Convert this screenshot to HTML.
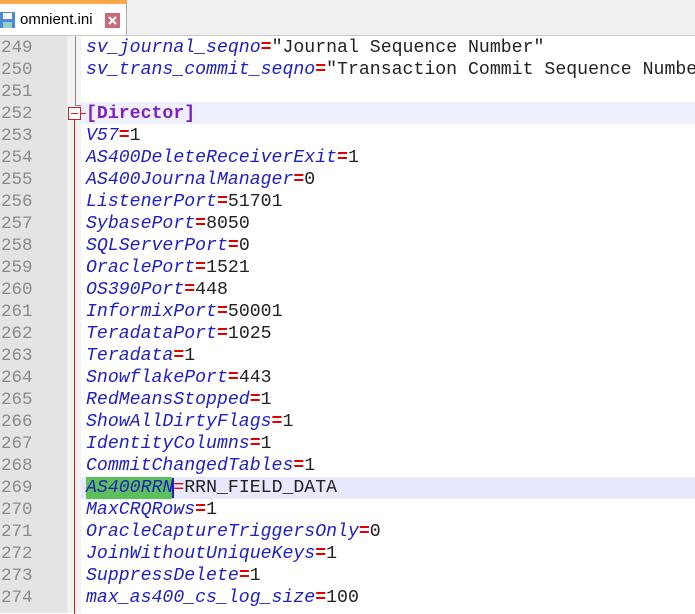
<!DOCTYPE html><html><head><style>
body{margin:0;width:695px;height:613px;overflow:hidden;background:#fff;font-family:"Liberation Mono",monospace;position:relative}
.tabbar{position:absolute;left:0;top:0;width:695px;height:35px;background:#f0f0f0;border-bottom:1px solid #c8c8c8}
.tab{position:absolute;left:0;top:0;width:127px;height:35px;background:#fff;border-top:4px solid #f8a848;box-sizing:border-box;border-right:1px solid #aaa}
.tab span{position:absolute;left:20px;top:7px;font:15px "Liberation Sans",sans-serif;color:#000}
.gut{position:absolute;left:0;top:36px;width:67px;height:577px;background:#e4e4e4}
.fold{position:absolute;left:67px;top:36px;width:14px;height:577px;background:#f2f2f2}
.ln{position:absolute;left:1px;font-size:17.5px;color:#8a8a8a;line-height:22px}
.l{position:absolute;left:86px;font-size:18.2px;line-height:22px;white-space:pre;color:#000}
.k{color:#2020c0;font-style:italic}
.e{color:#e00000;font-weight:bold}
.s{color:#222}
.hl{position:absolute;left:81px;width:614px;height:22px}
</style></head><body>
<div class="tabbar"><div class="tab"><svg style="position:absolute;left:0;top:7px" width="16" height="18"><rect x="0" y="1" width="15" height="16" fill="#4a8ad0"/><rect x="3" y="2" width="9" height="6" fill="#fff"/><rect x="3" y="11" width="9" height="6" fill="#9cc"/></svg><span>omnient.ini</span><svg style="position:absolute;left:105px;top:9px" width="15" height="15"><rect width="15" height="15" fill="#c86a7a"/><path d="M4 4L11 11M11 4L4 11" stroke="#fff" stroke-width="2.2"/></svg></div></div>
<div class="gut"></div><div class="fold"></div>
<div class="hl" style="top:102px;background:#eef0ff"></div>
<div class="hl" style="top:477px;background:#e8e8ff"></div>
<div style="position:absolute;left:86px;top:477px;width:86px;height:22px;background:#5cc05c"></div>
<div style="position:absolute;left:172px;top:478px;width:2px;height:20px;background:#2020c0"></div>
<div style="position:absolute;left:75px;top:36px;width:1px;height:70px;background:#888"></div>
<div style="position:absolute;left:75px;top:105px;width:6px;height:1px;background:#888"></div>
<div style="position:absolute;left:68px;top:107px;width:13px;height:13px;border:1px solid #d02020;box-sizing:border-box;background:#fff"></div>
<div style="position:absolute;left:71px;top:113px;width:7px;height:1px;background:#d02020"></div>
<div style="position:absolute;left:81px;top:113px;width:5px;height:1px;background:#d02020"></div>
<div style="position:absolute;left:74px;top:120px;width:1px;height:494px;background:#d02020"></div>
<div id="c"></div>
<script>
var L=[["sv_journal_seqno",'"Journal Sequence Number"'],["sv_trans_commit_seqno",'"Transaction Commit Sequence Number"'],null,"D",["V57","1"],["AS400DeleteReceiverExit","1"],["AS400JournalManager","0"],["ListenerPort","51701"],["SybasePort","8050"],["SQLServerPort","0"],["OraclePort","1521"],["OS390Port","448"],["InformixPort","50001"],["TeradataPort","1025"],["Teradata","1"],["SnowflakePort","443"],["RedMeansStopped","1"],["ShowAllDirtyFlags","1"],["IdentityColumns","1"],["CommitChangedTables","1"],["AS400RRN","RRN_FIELD_DATA"],["MaxCRQRows","1"],["OracleCaptureTriggersOnly","0"],["JoinWithoutUniqueKeys","1"],["SuppressDelete","1"],["max_as400_cs_log_size","100"]];
var h="";for(var i=0;i<L.length;i++){var t=37+i*22;h+='<div class="ln" style="top:'+t+'px">'+(249+i)+'</div>';var x=L[i];if(!x)continue;if(x=="D"){h+='<div class="l" style="top:'+t+'px;color:#8020c0;font-weight:bold">[Director]</div>';continue}
var eq=i==20?'<span style="color:#e00000">=</span>':'<span class="e">=</span>';h+='<div class="l" style="top:'+t+'px"><span class="k">'+x[0]+'</span>'+eq+'<span class="s">'+x[1]+'</span></div>';}
document.getElementById("c").innerHTML=h;
</script>
</body></html>
